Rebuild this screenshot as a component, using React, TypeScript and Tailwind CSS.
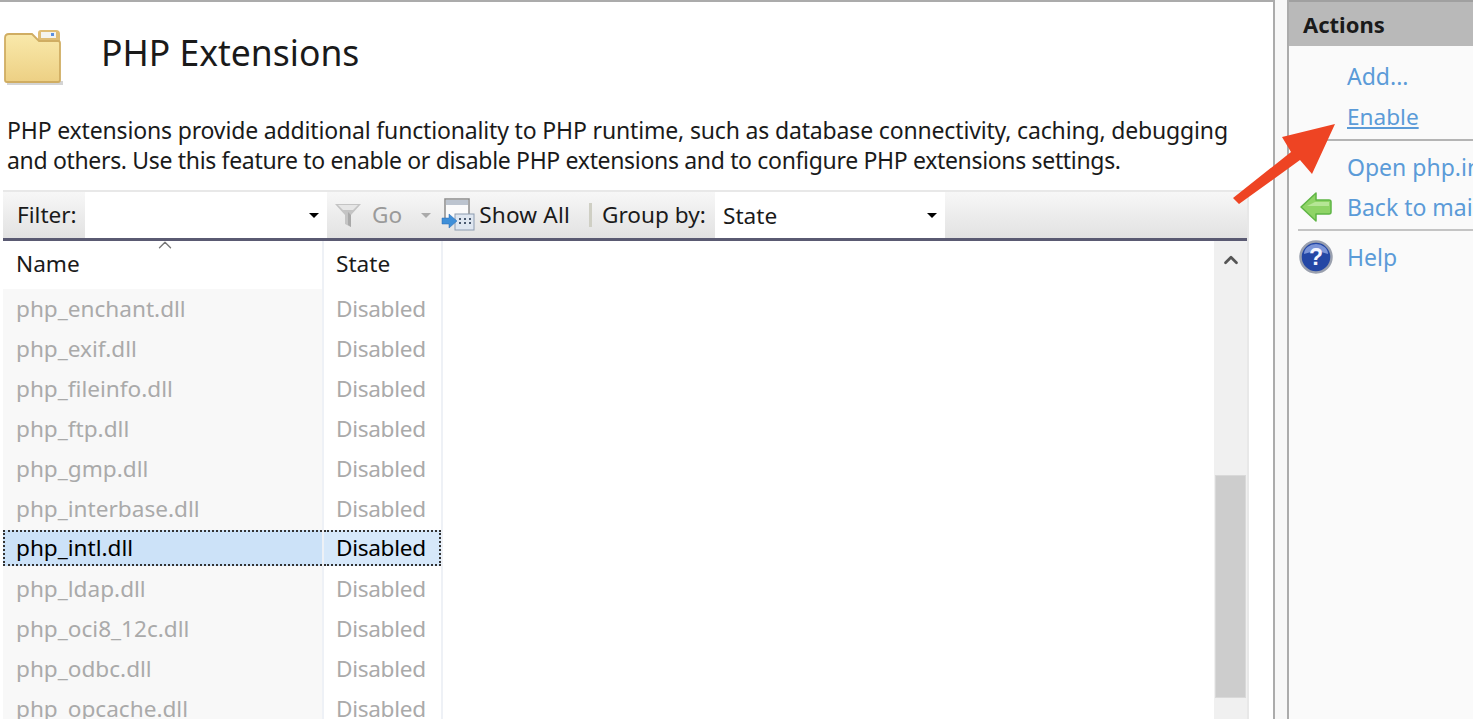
import { ChevronUp } from "lucide-react"

const rows = [
  "php_enchant.dll",
  "php_exif.dll",
  "php_fileinfo.dll",
  "php_ftp.dll",
  "php_gmp.dll",
  "php_interbase.dll",
  "php_intl.dll",
  "php_ldap.dll",
  "php_oci8_12c.dll",
  "php_odbc.dll",
  "php_opcache.dll",
]

function Caret() {
  return <div className="w-0 h-0 border-x-[5px] border-x-transparent border-t-[5px] border-t-black" />
}

function FolderIcon() {
  return (
    <svg width="64" height="60" viewBox="0 0 64 60">
      <defs>
        <linearGradient id="folderFill" x1="0" y1="0" x2="0" y2="1">
          <stop offset="0" stopColor="#f9e9ab" />
          <stop offset="1" stopColor="#edd084" />
        </linearGradient>
      </defs>
      <rect x="6" y="54" width="56" height="4" fill="#b0b0b0" opacity="0.55" />
      <path d="M37 36 V6 Q37 3 40 3 H55 Q59 3 59 7 V14 H37 Z" fill="#dfbd75" />
      <rect x="40" y="5" width="15" height="6" fill="#f4f4ee" />
      <rect x="50" y="6" width="3" height="3" fill="#5b8fe0" />
      <path d="M4 11 Q4 7 8 7 H31 L38 14 H57 Q59 14 59 16 V53 Q59 55 57 55 H6 Q4 55 4 53 Z" fill="url(#folderFill)" stroke="#d0ad62" strokeWidth="1.8" />
    </svg>
  )
}

function GoFunnel() {
  return (
    <svg width="30" height="30" viewBox="0 0 30 30">
      <path d="M2 4 H28 L18 15 V27 L12 24 V15 Z" fill="#c4c4c4" />
      <path d="M5 5 H25 L20 10 H10 Z" fill="#e6e6e6" />
      <path d="M18 15 V27 L15 25 V12 Z" fill="#a9a9a9" />
    </svg>
  )
}

function ShowAllIcon() {
  return (
    <svg width="34" height="36" viewBox="0 0 34 36">
      <rect x="4" y="2" width="24" height="22" fill="#fbfbfb" stroke="#8c8c8c" strokeWidth="1.5" />
      <rect x="5" y="3" width="22" height="5" fill="#bcc4cf" />
      <rect x="14" y="17" width="19" height="16" fill="#dfe7f1" stroke="#8c9bb0" />
      <path d="M18 22 h2 M23 22 h2 M28 22 h2 M18 26 h2 M23 26 h2 M28 26 h2" stroke="#4a5a70" strokeWidth="2" />
      <path d="M1 21 H8 V17 L16 24 L8 31 V27 H1 Z" fill="#3f8fd8" stroke="#2a6bb0" strokeWidth="0.5" />
    </svg>
  )
}

function BackIcon() {
  return (
    <svg width="34" height="32" viewBox="0 0 34 32">
      <path d="M2 16 L17 2 V9 H30 Q32 9 32 11 V21 Q32 23 30 23 H17 V30 Z" fill="#8fd466" stroke="#5fb545" strokeWidth="1.5" strokeLinejoin="round" />
      <path d="M16 11 H30 V15 H8 Z" fill="#b6e696" />
    </svg>
  )
}

function HelpIcon() {
  return (
    <svg width="34" height="34" viewBox="0 0 34 34">
      <circle cx="17" cy="17" r="15.5" fill="#2447a5" stroke="#9aa0ae" strokeWidth="2.5" />
      <path d="M5 14 A12 10 0 0 1 29 14 Q17 9 5 14 Z" fill="#7c95d8" />
      <text x="17" y="25" textAnchor="middle" fontSize="23" fontWeight="700" fill="#f4f6ff" fontFamily="'Liberation Sans', sans-serif">?</text>
    </svg>
  )
}

export default function App() {
  return (
    <div className="relative flex h-[719px] w-[1473px] overflow-hidden bg-[#f7f7f7] font-['Noto_Sans','Open_Sans',sans-serif] text-[23px] text-[#1a1a1a]">
      {/* Main feature page */}
      <div className="flex w-[1275px] shrink-0 flex-col border-t-2 border-r-2 border-[#ababab] bg-white">
        <div className="flex h-[100px] shrink-0 items-start pl-[1px] pt-[25px]">
          <FolderIcon />
          <h1 className="ml-[36px] mt-[-1px] text-[35.5px] leading-[52px] font-normal">PHP Extensions</h1>
        </div>

        <div className="ml-[7px] h-[88px] shrink-0 leading-[30px] pt-[13px] whitespace-nowrap">
          <p className="tracking-[-0.16px]">PHP extensions provide additional functionality to PHP runtime, such as database connectivity, caching, debugging</p>
          <p className="tracking-[-0.33px]">and others. Use this feature to enable or disable PHP extensions and to configure PHP extensions settings.</p>
        </div>

        <div className="ml-[3px] w-[1246px] flex-1 border-r-2 border-[#e8e8e8]">
          {/* Toolbar */}
          <div className="flex h-[51px] items-stretch border-t-2 border-b-[3px] border-t-[#e8e8e8] border-b-[#5a5a72] bg-gradient-to-b from-[#f7f7f7] to-[#e2e2e2] text-[22.6px]">
            <div className="flex w-[82px] items-center pl-[14px]">Filter:</div>
            <div className="flex w-[242px] items-center justify-end bg-white pr-[8px]"><Caret /></div>
            <div className="flex items-center pl-[6px] text-[#9a9a9a]">
              <GoFunnel />
              <span className="ml-[9px]">Go</span>
              <div className="ml-[19px] h-0 w-0 border-x-[5px] border-x-transparent border-t-[5px] border-t-[#aaaaaa]" />
            </div>
            <div className="ml-[10px] flex items-center">
              <ShowAllIcon />
              <span className="ml-[4px] tracking-[0.2px]">Show All</span>
            </div>
            <div className="ml-[19px] my-[11px] w-[3px] bg-[#cfcfc4]" />
            <div className="ml-[10px] flex w-[113px] items-center">Group by:</div>
            <div className="flex w-[230px] items-center justify-between bg-white pl-[8px] pr-[8px]">
              <span className="pt-[2px]">State</span>
              <Caret />
            </div>
          </div>

          <div className="flex">
            {/* List */}
            <div className="w-[1211px] text-[22.6px]">
              <div className="relative flex h-[48px] items-end">
                <ChevronUp className="absolute left-[151px] top-[-7px] text-[#777777]" size={22} strokeWidth={1.5} />
                <div className="flex h-full w-[319px] items-end pb-[8px] pl-[13px]">Name</div>
                <div className="flex h-full w-[121px] items-end border-x-2 border-[#eef1f6] pb-[8px] pl-[12px]">State</div>
              </div>
              {rows.map((name) => {
                const selected = name === "php_intl.dll"
                return (
                  <div key={name} className="flex h-10 w-[440px] items-center">
                    <div className="flex h-full w-[319px] items-center bg-[#f8f8f8]">
                      <div className={selected ? "mb-[2px] flex h-[36px] w-full items-center border-y-2 border-l-2 border-dotted border-[#333333] bg-[#cce2f8] pl-[11px] text-black" : "pl-[13px] text-[#aaaaaa]"}>{name}</div>
                    </div>
                    <div className="flex h-full w-[121px] items-center border-x-2 border-[#eef1f6]">
                      <div className={selected ? "mb-[2px] flex h-[36px] w-full items-center border-y-2 border-r-2 border-dotted border-[#333333] bg-[#d6e8fa] pl-[12px] tracking-[-0.3px] text-black" : "pl-[12px] tracking-[-0.3px] text-[#aaaaaa]"}>Disabled</div>
                    </div>
                  </div>
                )
              })}
            </div>

            {/* Scrollbar */}
            <div className="flex h-[479px] w-[33px] flex-col bg-[#f0f0f0]">
              <div className="flex h-[234px] justify-center pt-[8px]">
                <ChevronUp className="text-[#555555]" size={22} strokeWidth={3} />
              </div>
              <div className="mx-[1px] h-[223px] border border-[#d9d9d9] bg-[#cdcdcd]" />
            </div>
          </div>
        </div>
      </div>

      {/* Actions pane */}
      <div className="ml-[12px] flex-1 border-l-2 border-[#ababab] bg-[#fafafa]">
        <div className="flex h-[46px] items-center border-t-2 border-[#a0a0a0] bg-[#b9b9b9] pl-[14px] font-bold">
          <span className="text-[22px]">Actions</span>
        </div>
        <div className="text-[#5b9bd8] whitespace-nowrap">
          <div className="flex h-[50px] items-end pl-[58px] pb-[3px]">Add...</div>
          <div className="flex h-[40px] items-center pl-[58px] pt-[2px] text-[22.6px] underline">Enable</div>
          <div className="mx-[9px] mt-[3px] h-[2px] bg-[#b4b4b4]" />
          <div className="mt-[6px] flex h-10 items-center pl-[58px]">Open php.ini</div>
          <div className="flex h-10 items-center pl-[10px]">
            <BackIcon />
            <span className="ml-[14px]">Back to main</span>
          </div>
          <div className="mx-[9px] mt-[2px] h-[2px] bg-[#c4c4c4]" />
          <div className="mt-[3px] flex h-[46px] items-center pl-[10px]">
            <HelpIcon />
            <span className="ml-[14px]">Help</span>
          </div>
        </div>
      </div>

      {/* Annotation arrow */}
      <svg className="absolute left-[1230px] top-[120px]" width="110" height="90" viewBox="0 0 110 90">
        <polygon points="105,4 52,17 61,32 3,78 9,84 70,40 82,54" fill="#ee4423" />
      </svg>
    </div>
  )
}
